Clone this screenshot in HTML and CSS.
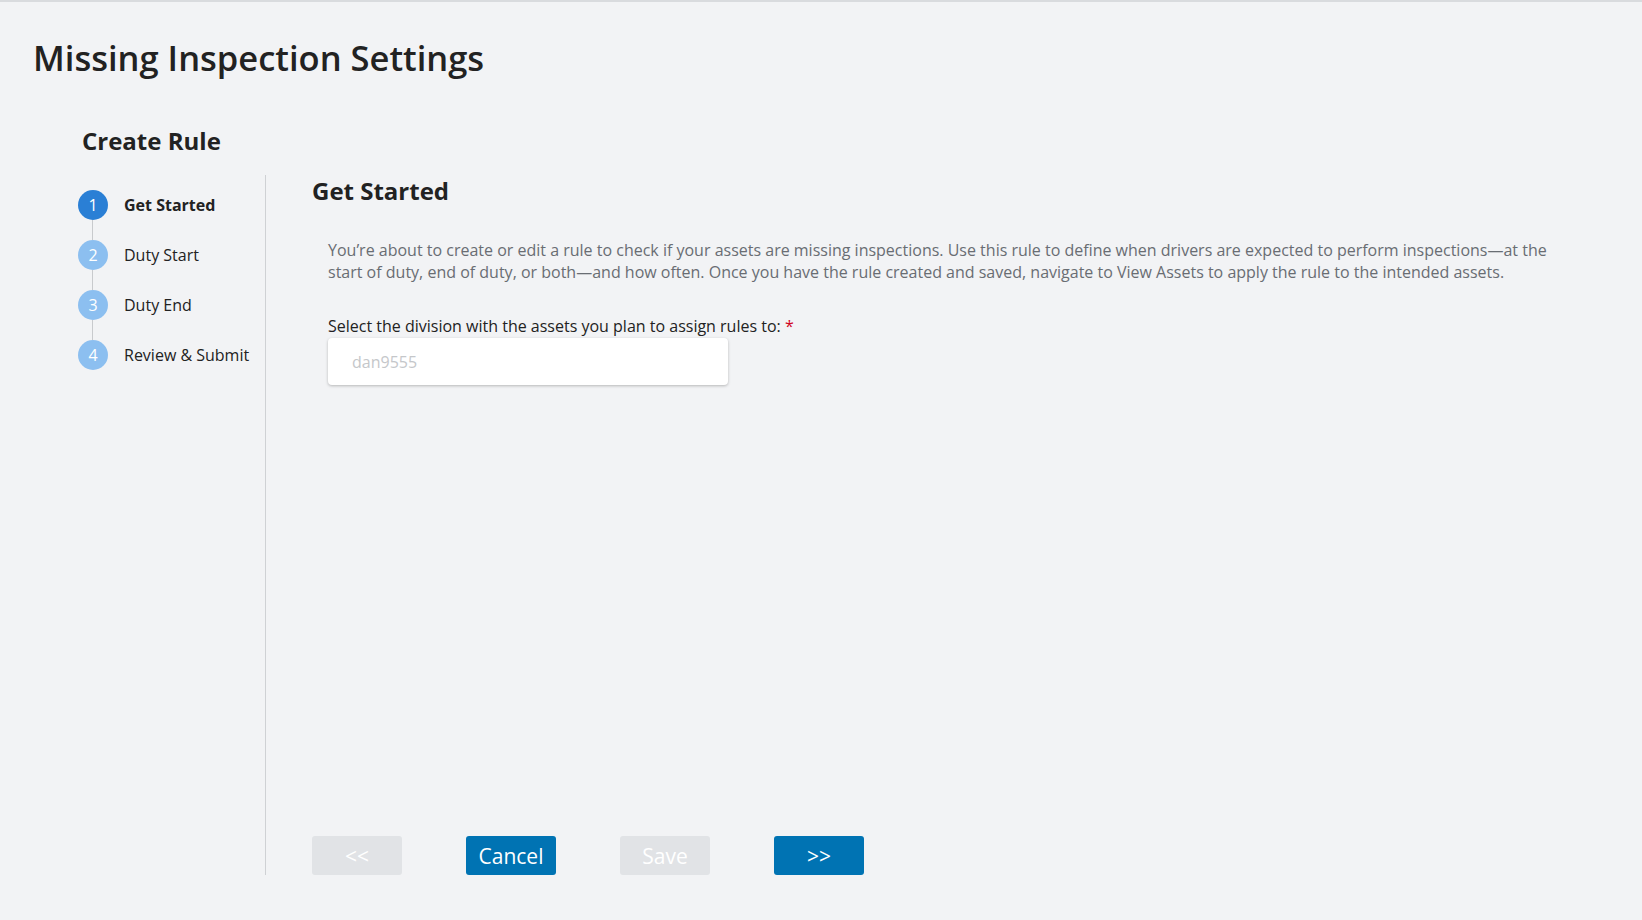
FILE: index.html
```html
<!DOCTYPE html>
<html lang="en">
<head>
  <meta charset="UTF-8">
  <meta name="viewport" content="width=device-width, initial-scale=1.0">
  <title>Missing Inspection Settings</title>
  <link rel="stylesheet" href="styles.css">
</head>
<body>

  <h1 class="page-title">Missing Inspection Settings</h1>

  <div class="wizard">
    <h2 class="wizard-title">Create Rule</h2>

    <div class="wizard-body">
      <ul class="steps">
        <li class="step active"><span class="step-num">1</span><span class="step-label">Get Started</span></li>
        <li class="step-line"></li>
        <li class="step"><span class="step-num">2</span><span class="step-label">Duty Start</span></li>
        <li class="step-line"></li>
        <li class="step"><span class="step-num">3</span><span class="step-label">Duty End</span></li>
        <li class="step-line"></li>
        <li class="step"><span class="step-num">4</span><span class="step-label">Review &amp; Submit</span></li>
      </ul>

      <div class="step-content">
        <h3>Get Started</h3>
        <p class="intro">You’re about to create or edit a rule to check if your assets are missing inspections. Use this rule to define when drivers are expected to perform inspections—at the start of duty, end of duty, or both—and how often. Once you have the rule created and saved, navigate to View Assets to apply the rule to the intended assets.</p>

        <label class="field-label" for="division">Select the division with the assets you plan to assign rules to: <span class="required">*</span></label>
        <input id="division" class="field-input" type="text" placeholder="dan9555">

        <div class="actions">
          <button class="btn disabled" disabled>&lt;&lt;</button>
          <button class="btn primary">Cancel</button>
          <button class="btn disabled" disabled>Save</button>
          <button class="btn primary">&gt;&gt;</button>
        </div>
      </div>
    </div>
  </div>

</body>
</html>
```

FILE: styles.css
```css
body {
  margin: 0;
  border-top: 2px solid #d9dbde;
  font-family: "Open Sans", Arial, sans-serif;
  background: #f2f3f5;
  color: #222;
}
.page-title {
  margin: 30px 0 0 33px;
  font-size: 34.5px;
  line-height: 52px;
  font-weight: 600;
  color: #222;
}
.wizard-title {
  margin: 41px 0 0 82px;
  font-size: 24px;
  line-height: 32px;
  font-weight: 700;
  color: #222;
}
.wizard-body {
  display: flex;
  height: 700px;
  margin-top: 18px;
}
.steps {
  list-style: none;
  margin: 0;
  padding: 15px 0 0 78px;
  width: 187px;
  border-right: 1px solid #cfd1d4;
}
.step {
  display: flex;
  align-items: center;
  gap: 16px;
  height: 30px;
}
.step-num {
  display: flex;
  align-items: center;
  justify-content: center;
  width: 30px;
  height: 30px;
  border-radius: 50%;
  background: #8cbff0;
  color: #fff;
  font-size: 16px;
}
.step.active .step-num {
  background: #2a7fd5;
}
.step-label {
  font-size: 16px;
  color: #222;
}
.step.active .step-label {
  font-weight: 700;
}
.step-line {
  width: 1px;
  height: 20px;
  margin-left: 14px;
  background: #c8cacd;
}
.step-content {
  display: flex;
  flex-direction: column;
  flex: 1;
  padding: 0 60px 0 46px;
}
.step-content h3 {
  margin: 0;
  font-size: 24px;
  line-height: 32px;
  font-weight: 700;
  color: #222;
}
.intro {
  margin: 32px 0 0 16px;
  font-size: 16px;
  line-height: 22px;
  color: #696d73;
}
.field-label {
  margin: 32px 0 0 16px;
  font-size: 16px;
  line-height: 22px;
  color: #222;
}
.required {
  color: #d0021b;
}
.field-input {
  width: 400px;
  height: 47px;
  box-sizing: border-box;
  margin: 1px 0 0 16px;
  padding: 0 24px;
  border: none;
  border-radius: 4px;
  background: #fff;
  box-shadow: 0 1px 3px rgba(0, 0, 0, 0.25);
  font-family: inherit;
  font-size: 16px;
}
.field-input::placeholder {
  color: #c5c7ca;
}
.actions {
  display: flex;
  gap: 64px;
  margin-top: auto;
}
.btn {
  width: 90px;
  height: 39px;
  padding: 0;
  border: none;
  border-radius: 3px;
  font-family: inherit;
  font-size: 21px;
  color: #fff;
  cursor: pointer;
}
.btn.primary {
  background: #0073b3;
}
.btn.primary:hover {
  background: #005f94;
}
.btn.disabled {
  background: #e1e3e6;
  cursor: default;
}
```
